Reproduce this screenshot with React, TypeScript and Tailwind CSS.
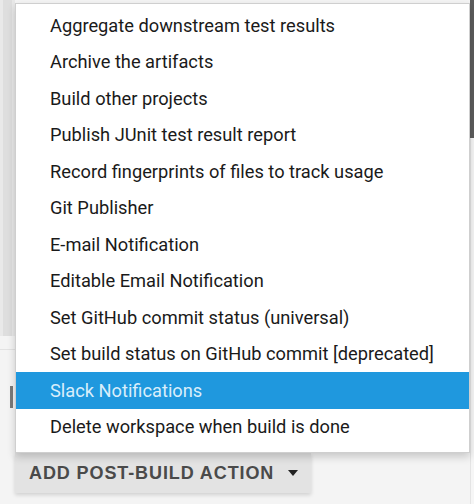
import React from "react";

const items = [
  "Aggregate downstream test results",
  "Archive the artifacts",
  "Build other projects",
  "Publish JUnit test result report",
  "Record fingerprints of files to track usage",
  "Git Publisher",
  "E-mail Notification",
  "Editable Email Notification",
  "Set GitHub commit status (universal)",
  "Set build status on GitHub commit [deprecated]",
  "Slack Notifications",
  "Delete workspace when build is done",
];

export default function App() {
  return (
    <div className="relative flex h-[504px] w-[474px] overflow-hidden bg-[#f4f4f4]">
      {/* left strip */}
      <div className="flex w-[15px] shrink-0 flex-col">
        <div className="h-[336px] border-l-[3px] border-r-[3px] border-l-[#e9e9e9] border-r-[#e8e8e8] bg-[#dedede]" />
        <div className="h-[14px] border-b border-[#e2e2e2]" />
        <div className="ml-[10px] mt-[36px] h-[22px] w-[3px] bg-[#7a7a7a]" />
      </div>
      {/* main column */}
      <div className="flex w-[455px] shrink-0 flex-col">
        <div
          className="relative z-10 mt-[3px] border border-[#cfcfcf] bg-white pb-[7px] pt-[3px] shadow-[0_4px_8px_rgba(0,0,0,0.18)]"
          style={{ fontFamily: "Roboto, 'Noto Sans', sans-serif" }}
        >
          {items.map((t) => {
            const sel = t === "Slack Notifications";
            return (
              <div
                key={t}
                className={`flex h-[36.5px] items-center pl-[34px] text-[18.25px] ${
                  sel ? "bg-[#1f98de] text-[#d9eefb]" : "text-[#1a1a1a]"
                }`}
              >
                {t}
              </div>
            );
          })}
        </div>
        <div className="flex">
          <div
            className="flex h-[40px] w-[296px] items-center bg-[#e3e3e3] pl-[14px] shadow-[0_2px_4px_rgba(0,0,0,0.15)]"
            style={{ fontFamily: "'Liberation Sans', Arial, sans-serif" }}
          >
            <span className="text-[18px] font-bold tracking-[0.9px] text-[#4a4a4a]">
              ADD POST-BUILD ACTION
            </span>
            <svg className="ml-[14px]" width="10" height="6" viewBox="0 0 10 6">
              <path d="M0 0 L10 0 L5 6 Z" fill="#222" />
            </svg>
          </div>
        </div>
      </div>
      {/* right strip */}
      <div className="flex w-[4px] shrink-0 flex-col">
        <div className="h-[138px] bg-[#5c5c5c]" />
        <div className="flex-1 border-l border-[#e4e4e4] bg-[#f6f6f6]" />
      </div>
    </div>
  );
}
